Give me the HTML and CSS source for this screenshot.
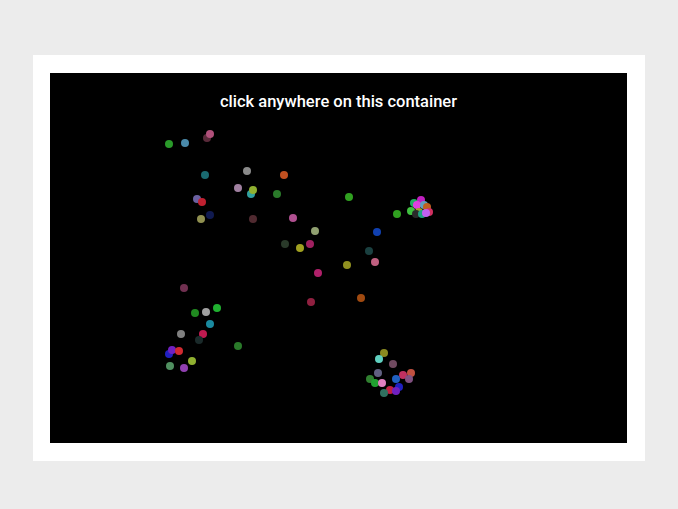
FILE: index.html
```html
<!DOCTYPE html>
<html>
<head>
  <meta charset="utf-8">
  <link rel="stylesheet" href="styles.css">
</head>
<body>
  <div class="card">
    <div class="container" id="container">
      <p class="hint">click anywhere on this container</p>
    </div>
  </div>

  <script src="app.js"></script>
</body>
</html>
```
FILE: styles.css
```css
body {
  margin: 0;
  padding: 0;
  width: 678px;
  height: 509px;
  background: #ececec;
  font-family: Roboto, 'Liberation Sans', sans-serif;
  overflow: hidden;
}

.card {
  width: 612px;
  height: 406px;
  margin: 55px 0 0 33px;
  padding: 18px 18px 18px 17px;
  box-sizing: border-box;
  background: #fff;
}

.container {
  position: relative;
  width: 577px;
  height: 370px;
  background: #000;
  overflow: hidden;
}

.hint {
  margin: 0;
  padding-top: 19px;
  text-align: center;
  color: #fff;
  font-size: 16.5px;
  font-weight: 500;
  line-height: 19px;
}

.particle {
  position: absolute;
  width: 8px;
  height: 8px;
  border-radius: 50%;
  transform: translate(-50%, -50%);
}
```
FILE: app.js
```js
// particles left behind by earlier clicks: [x, y, colour]
var particles = [
  [119, 71, '#2a9a2a'], [135, 70, '#4a8aaa'], [157, 65, '#5a2a3a'], [160, 61, '#b0507a'],
  [155, 102, '#1a6a70'], [197, 98, '#8a8a8a'], [234, 102, '#c05020'], [188, 115, '#a080a0'],
  [201, 121, '#30a0a0'], [203, 117, '#90b030'], [227, 121, '#2a7a2a'], [299, 124, '#30a020'],
  [147, 126, '#6a60a0'], [152, 129, '#c02030'], [160, 142, '#101a50'], [151, 146, '#909050'],
  [203, 146, '#502a30'], [243, 145, '#b05090'], [265, 158, '#90a070'], [327, 159, '#1040b0'],
  [235, 171, '#2a3a2a'], [250, 175, '#a0a020'], [260, 171, '#a02060'], [319, 178, '#1a4040'],
  [297, 192, '#909020'], [325, 189, '#c06080'], [268, 200, '#b0206a'], [134, 215, '#703050'],
  [311, 225, '#a04a10'], [261, 229, '#902040'], [167, 235, '#20b030'], [145, 240, '#208a20'],
  [156, 239, '#a0a0a0'], [160, 251, '#1a8aa0'], [131, 261, '#808080'], [153, 261, '#c01a50'],
  [149, 267, '#1a2a2a'], [188, 273, '#2a7a2a'], [119, 281, '#2020c0'], [122, 277, '#7020c0'],
  [129, 278, '#d02a30'], [142, 288, '#90b030'], [120, 293, '#509060'], [134, 295, '#9040b0'],
  [347, 141, '#30a020'],
  [364, 130, '#20b060'], [371, 127, '#c020c0'], [367, 132, '#e040e0'], [374, 132, '#60a0c0'],
  [377, 134, '#c06020'], [361, 138, '#40c040'], [369, 139, '#a0a030'], [366, 141, '#2a2a2a'],
  [372, 141, '#20a080'], [379, 139, '#d03060'], [376, 140, '#c060f0'],
  [334, 280, '#8a8a20'], [329, 286, '#60d0c0'], [343, 291, '#704a60'], [328, 300, '#606080'],
  [361, 300, '#c05040'], [353, 302, '#c03060'], [359, 306, '#805080'], [346, 306, '#2060c0'],
  [320, 306, '#308030'], [325, 310, '#20a030'], [332, 310, '#e080c0'], [349, 314, '#2020c0'],
  [340, 317, '#c02040'], [346, 318, '#7020c0'], [334, 320, '#307060']
];

var container = document.getElementById('container');

function addParticle(x, y, color) {
  var dot = document.createElement('span');
  dot.className = 'particle';
  dot.style.left = x + 'px';
  dot.style.top = y + 'px';
  dot.style.background = color;
  container.appendChild(dot);
}

particles.forEach(function (p) {
  addParticle(p[0], p[1], p[2]);
});

container.addEventListener('click', function (e) {
  var rect = container.getBoundingClientRect();
  var hue = Math.floor(Math.random() * 360);
  addParticle(e.clientX - rect.left, e.clientY - rect.top, 'hsl(' + hue + ', 60%, 45%)');
});
```
